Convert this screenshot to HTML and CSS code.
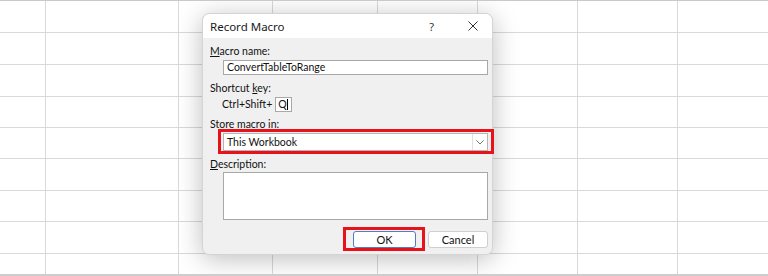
FILE: index.html
```html
<!DOCTYPE html>
<html>
<head>
<meta charset="utf-8">
<link rel="stylesheet" href="styles.css">
</head>
<body>
<div class="sheet">
  <div class="cols">
    <div class="col c1"></div><div class="col c2"></div><div class="col c3"></div><div class="col c4"></div>
    <div class="col c5"></div><div class="col c5"></div><div class="col c5"></div><div class="col last"></div>
  </div>
  <div class="rows">
    <div class="row r32"></div><div class="row r32"></div><div class="row r32"></div><div class="row r31"></div>
    <div class="row r31"></div><div class="row r32"></div><div class="row r31"></div><div class="row r32"></div>
    <div class="row lastrow"></div>
  </div>

  <div class="dialog">
    <div class="titlebar">
      <span class="title">Record Macro</span>
      <span class="help">?</span>
      <svg class="close" width="10" height="10" viewBox="0 0 10 10"><path d="M0.5 0.5 L9.5 9.5 M9.5 0.5 L0.5 9.5" stroke="#333" stroke-width="1" fill="none"/></svg>
    </div>
    <div class="body">
      <div class="label l-first"><u>M</u>acro name:</div>
      <div class="field name">ConvertTableToRange</div>
      <div class="label">Shortcut <u>k</u>ey:</div>
      <div class="shortcut">
        <span class="keys">Ctrl+Shift+</span>
        <span class="keybox">Q<span class="caret"></span></span>
      </div>
      <div class="label">Store macro in:</div>
      <div class="mark mark-combo">
        <div class="combo">
          <span class="combo-text">This Workbook</span>
          <span class="arrow"><svg width="8" height="5" viewBox="0 0 8 5"><path d="M0.5 0.5 L4 4 L7.5 0.5" stroke="#777" stroke-width="1" fill="none"/></svg></span>
        </div>
      </div>
      <div class="label"><u>D</u>escription:</div>
      <div class="field desc"></div>
      <div class="buttons">
        <div class="mark mark-ok"><div class="btn ok">OK</div></div>
        <div class="btn cancel">Cancel</div>
      </div>
    </div>
  </div>
</div>
</body>
</html>
```

FILE: styles.css
```css
html, body {
  margin: 0;
  padding: 0;
  background: #ffffff;
}
.sheet {
  position: relative;
  width: 768px;
  height: 276px;
  box-sizing: border-box;
  border-top: 1px solid #c9c9c9;
  border-bottom: 2px solid #cdcdcd;
  display: grid;
  grid-template-columns: 1fr;
  grid-template-rows: 1fr;
  overflow: hidden;
  font-family: "Lato", "Noto Sans", sans-serif;
}
.cols, .rows {
  grid-area: 1 / 1;
  display: flex;
}
.rows { flex-direction: column; }
.col {
  box-sizing: border-box;
  border-right: 1px solid #d9d9d9;
  flex: none;
}
.c1 { width: 46px; }
.c2 { width: 133px; }
.c3 { width: 94px; }
.c4 { width: 105px; }
.c5 { width: 100px; }
.col.last { flex: 1; border-right: none; }
.row {
  box-sizing: border-box;
  border-bottom: 1px solid #d9d9d9;
  flex: none;
}
.r32 { height: 32px; }
.r31 { height: 31px; }
.row.lastrow { flex: 1; border-bottom: none; }

.dialog {
  position: absolute;
  left: 202px;
  top: 12px;
  width: 291px;
  height: 242px;
  box-sizing: border-box;
  background: #f0f0f0;
  border: 1px solid #d4d4d4;
  border-radius: 7px;
  box-shadow: 0 4px 26px rgba(0, 0, 0, 0.26);
  display: flex;
  flex-direction: column;
}
.titlebar {
  height: 24px;
  background: #ffffff;
  border-radius: 7px 7px 0 0;
  display: flex;
  align-items: center;
  padding-left: 7px;
  font-family: "Noto Sans", sans-serif;
  font-size: 11.5px;
  color: #1a1a1a;
}
.title { flex: 1; }
.help {
  font-size: 11px;
  margin-right: 34px;
  color: #333;
}
.close { margin-right: 14px; }
.body {
  padding: 6px 4px 0 7px;
  font-size: 10.5px;
  color: #111111;
  display: flex;
  flex-direction: column;
}
.label {
  line-height: 14px;
  height: 14px;
  margin-top: 6px;
  white-space: nowrap;
}
.label.l-first { margin-top: 0; }
.label u { text-decoration-thickness: 1px; text-underline-offset: 1px; }
.field {
  margin-top: 2px;
  margin-left: 13px;
  box-sizing: border-box;
  background: #ffffff;
  border: 1px solid #a8a8a8;
}
.name {
  height: 15px;
  line-height: 13px;
  padding-left: 3px;
}
.shortcut {
  margin-top: 2px;
  margin-left: 12px;
  height: 14px;
  display: flex;
  align-items: center;
}
.keys { margin-right: 3px; }
.keybox {
  box-sizing: border-box;
  width: 17px;
  height: 15px;
  background: #ffffff;
  border: 1px solid #a8a8a8;
  padding-left: 2px;
  line-height: 13px;
  display: flex;
  align-items: center;
}
.caret {
  width: 1px;
  height: 11px;
  background: #000;
}
.mark { position: relative; }
.mark::after {
  content: "";
  position: absolute;
  border: 3px solid #e8121b;
  pointer-events: none;
}
.mark-combo {
  margin-top: 2px;
  margin-left: 13px;
}
.mark-combo::after {
  top: -4px; left: -5px; right: -6px; bottom: -3px;
}
.combo {
  height: 18px;
  box-sizing: border-box;
  background: #ffffff;
  border: 1px solid #b5b5b5;
  display: flex;
  align-items: center;
}
.combo-text { flex: 1; padding-left: 3px; }
.arrow {
  width: 15px;
  height: 16px;
  box-sizing: border-box;
  border-left: 1px solid #e0e0e0;
  display: flex;
  align-items: center;
  justify-content: center;
}
.desc {
  margin-top: 1px;
  height: 48px;
}
.buttons {
  margin-top: 11px;
  display: flex;
  justify-content: flex-end;
  gap: 12px;
}
.mark-ok::after {
  top: -4px; left: -10px; right: -9px; bottom: -3px;
}
.btn {
  height: 17px;
  box-sizing: border-box;
  background: #ffffff;
  border-radius: 3px;
  display: flex;
  align-items: center;
  justify-content: center;
  font-size: 11px;
}
.ok {
  width: 63px;
  border: 1px solid #4d7fc4;
}
.cancel {
  width: 60px;
  border: 1px solid #cfcfcf;
}
```
